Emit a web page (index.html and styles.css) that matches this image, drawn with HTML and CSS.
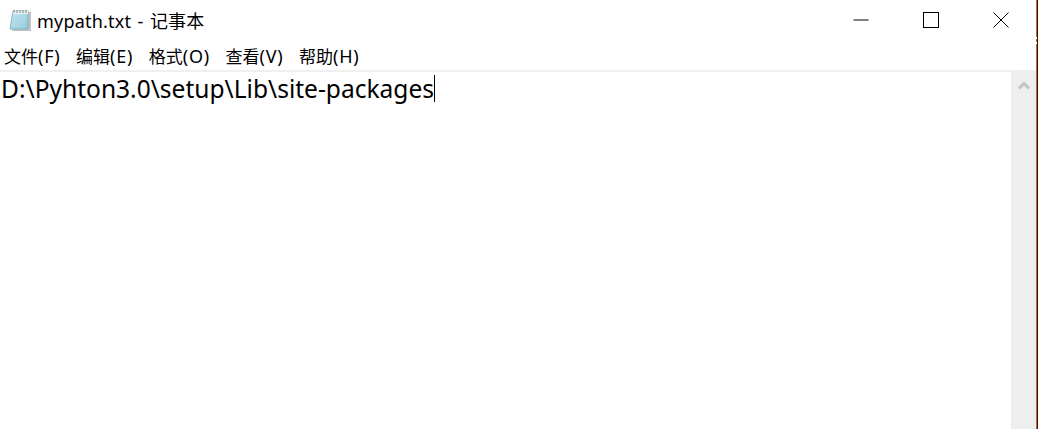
FILE: index.html
```html
<!DOCTYPE html>
<html>
<head>
  <title>mypath.txt - 记事本</title>
  <link rel="stylesheet" href="styles.css">
</head>
<body>
  <div class="window">
    <div class="main">
      <div class="titlebar">
        <svg class="app-icon" width="24" height="24" viewBox="0 0 24 24">
          <defs>
            <linearGradient id="page" x1="0" y1="0" x2="1" y2="1">
              <stop offset="0" stop-color="#cdeaf2"/>
              <stop offset="1" stop-color="#8cc8da"/>
            </linearGradient>
          </defs>
          <path d="M5 3h16v19H2z" fill="#8a8f92" opacity="0.55" transform="translate(2 1)"/>
          <path d="M5 3h15v18H2z" fill="url(#page)" stroke="#84b4c4" stroke-width="1"/>
          <path d="M5 3h15v3H4.500z" fill="#eef1f2"/>
          <path d="M6 2v3M9 2v3M12 2v3M15 2v3M18 2v3" stroke="#7d8589" stroke-width="1"/>
          <path d="M5 9h13M4.600 12h13M4.200 15h13M3.800 18h13" stroke="#b0d9e5" stroke-width="1"/>
        </svg>
        <span class="title">mypath.txt - 记事本</span>
        <div class="controls">
          <div class="control">
            <svg width="16" height="16" viewBox="0 0 16 16"><path d="M0.500 8h15" stroke="#000" stroke-width="1"/></svg>
          </div>
          <div class="control">
            <svg width="16" height="16" viewBox="0 0 16 16"><rect x="0.500" y="0.500" width="15" height="15" fill="none" stroke="#000" stroke-width="1"/></svg>
          </div>
          <div class="control">
            <svg width="16" height="16" viewBox="0 0 16 16"><path d="M0.500 0.500l15 15M15.500 0.500l-15 15" stroke="#000" stroke-width="1"/></svg>
          </div>
        </div>
      </div>

      <div class="menubar">
        <span class="menu-item">文件<span class="key">(F)</span></span>
        <span class="menu-item">编辑<span class="key">(E)</span></span>
        <span class="menu-item">格式<span class="key">(O)</span></span>
        <span class="menu-item">查看<span class="key">(V)</span></span>
        <span class="menu-item">帮助<span class="key">(H)</span></span>
      </div>

      <div class="content">
        <div class="editor"><span class="text">D:\Pyhton3.0\setup\Lib\site-packages</span><span class="caret"></span></div>
        <div class="scrollbar">
          <svg width="12" height="10" viewBox="0 0 12 10"><path d="M1 8.500l5-5 5 5" fill="none" stroke="#c4c4c4" stroke-width="3"/></svg>
        </div>
      </div>
    </div>
    <div class="edge"></div>
  </div>
</body>
</html>
```

FILE: styles.css
```css
html, body {
  margin: 0;
  height: 100%;
  overflow: hidden;
  background: #fff;
}

body {
  font-family: "Noto Sans", "Noto Sans CJK SC", sans-serif;
  color: #000;
}

.window {
  display: flex;
  height: 429px;
}

.main {
  display: flex;
  flex-direction: column;
  flex: 1;
  min-width: 0;
}

/* sliver of the window behind, on the right */
.edge {
  flex: none;
  width: 1px;
  border-right: 1px solid #2a1c14;
  background: linear-gradient(#c8641f 37px, #fff 37px, #fff 39px, #c8641f 39px, #c8641f 42px, #fff 42px, #fff 44px, #c8641f 44px);
}

.titlebar {
  display: flex;
  align-items: center;
  height: 40px;
  padding-left: 8px;
}

.app-icon {
  flex: none;
  margin-right: 5px;
}

.title {
  font-size: 18px;
  letter-spacing: 0.200px;
  word-spacing: 1.500px;
}

.controls {
  display: flex;
  margin-left: auto;
}

.control {
  display: flex;
  align-items: center;
  justify-content: center;
  width: 70px;
  height: 40px;
}

.menubar {
  display: flex;
  align-items: center;
  gap: 15.500px;
  height: 30px;
  padding-left: 4px;
  border-bottom: 2px solid #f0f0f0;
}

.menu-item {
  font-size: 17px;
}

.key {
  font-size: 18px;
  letter-spacing: 0.800px;
}

.content {
  display: flex;
  flex: 1;
  min-height: 0;
}

.editor {
  flex: 1;
  display: flex;
  align-items: flex-start;
  padding-left: 1px;
  font-size: 24.550px;
  line-height: 33px;
}

.caret {
  width: 1px;
  height: 27px;
  margin-top: 3px;
  background: #000;
}

.scrollbar {
  display: flex;
  justify-content: center;
  width: 25px;
  padding-top: 10px;
  box-sizing: border-box;
  background: #eeeeee;
  margin-top: -2px;
}

.scrollbar svg {
  display: block;
}
```
